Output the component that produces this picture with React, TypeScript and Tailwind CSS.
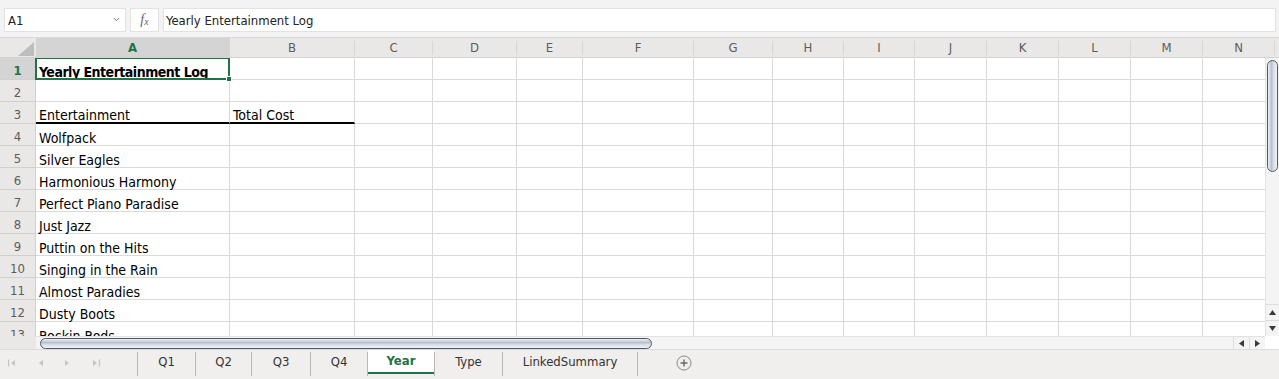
import { ChevronDown } from "lucide-react";

const COLS = ["A", "B", "C", "D", "E", "F", "G", "H", "I", "J", "K", "L", "M", "N"];
const GRID =
  "grid grid-cols-[36px_194px_125px_78px_84px_66px_111px_79px_71px_71px_72px_72px_72px_72px_72px]";

const ROWS: { a?: string; b?: string; bold?: boolean; head?: boolean }[] = [
  { a: "Yearly Entertainment Log", bold: true },
  {},
  { a: "Entertainment", b: "Total Cost", head: true },
  { a: "Wolfpack" },
  { a: "Silver Eagles" },
  { a: "Harmonious Harmony" },
  { a: "Perfect Piano Paradise" },
  { a: "Just Jazz" },
  { a: "Puttin on the Hits" },
  { a: "Singing in the Rain" },
  { a: "Almost Paradies" },
  { a: "Dusty Boots" },
  { a: "Rockin Rods" },
];

const TABS = [
  { name: "Q1", w: "w-[57px]" },
  { name: "Q2", w: "w-[55px]" },
  { name: "Q3", w: "w-[58px]" },
  { name: "Q4", w: "w-[56px]" },
  { name: "Year", w: "w-[66px]", active: true },
  { name: "Type", w: "w-[67px]" },
  { name: "LinkedSummary", w: "w-[134px]" },
];

function Tri({ dir, bar }: { dir: "l" | "r"; bar?: boolean }) {
  return (
    <svg width="10" height="10" viewBox="0 0 10 10" className="text-[#c4c4c4]">
      {dir === "l" ? (
        <>
          {bar && <rect x="1" y="1.5" width="1.2" height="7" fill="currentColor" />}
          <path d="M8 2 L4 5 L8 8 Z" fill="currentColor" />
        </>
      ) : (
        <>
          <path d="M2 2 L6 5 L2 8 Z" fill="currentColor" />
          {bar && <rect x="7.8" y="1.5" width="1.2" height="7" fill="currentColor" />}
        </>
      )}
    </svg>
  );
}

function Arrow({ d }: { d: "up" | "down" | "left" | "right" }) {
  const p = {
    up: "M1 7 L4.5 2 L8 7 Z",
    down: "M1 2 L4.5 7 L8 2 Z",
    left: "M7 1 L2 4.5 L7 8 Z",
    right: "M2 1 L7 4.5 L2 8 Z",
  }[d];
  return (
    <svg width="9" height="9" viewBox="0 0 9 9">
      <path d={p} fill="#3a3a3a" />
    </svg>
  );
}

export default function App() {
  return (
    <div className="w-[1279px] h-[379px] overflow-hidden bg-white font-['DejaVu_Sans_Condensed','DejaVu_Sans',sans-serif] text-black">
      {/* Formula bar */}
      <div className="h-[38px] bg-[#f3f3f3] border-b border-[#dadada] flex items-center gap-[4px] pl-[4px] pr-[3px] pt-[2px]">
        <div className="w-[122px] h-[24px] bg-white border border-[#e2e2e2] flex items-center justify-between pl-[3px] pr-[4px] pt-[2px] text-[13px] text-[#222]">
          <span>A1</span>
          <ChevronDown size={9} strokeWidth={2.5} className="text-[#666] -mt-[2px]" />
        </div>
        <div className="w-[29px] h-[24px] bg-white border border-[#e2e2e2] flex items-center justify-center font-['Liberation_Serif',serif] italic text-[#666]">
          <span className="text-[14px]">f</span>
          <span className="text-[10px] mt-[4px]">x</span>
        </div>
        <div className="flex-1 h-[24px] bg-white border border-[#e2e2e2] flex items-center pl-[2px] pt-[2px] text-[13px] text-[#222]">
          Yearly Entertainment Log
        </div>
      </div>

      {/* Column header */}
      <div className="h-[20px] bg-[#e9e8e7] border-b border-[#d2d2d2]">
        <div className={`${GRID} h-full`}>
          <div className="flex items-end justify-end pr-[2px] pb-[2px]">
            <svg width="16" height="14" viewBox="0 0 16 14">
              <path d="M16 0 L16 14 L0 14 Z" fill="#bdbdbd" />
            </svg>
          </div>
          {COLS.map((c) => (
            <div
              key={c}
              className={`flex items-center ${c === "A" ? "bg-[#d4d4d4]" : ""}`}
            >
              <span
                className={`flex-1 text-center text-[13px] ${
                  c === "A" ? "font-bold text-[#217346]" : "text-[#5c5c5c]"
                }`}
              >
                {c}
              </span>
              <span className="w-px h-[14px] bg-[#d6d6d6]" />
            </div>
          ))}
        </div>
      </div>

      {/* Body */}
      <div className="flex h-[278px]">
        <div className="w-[1265px] overflow-hidden">
          {ROWS.map((r, i) => (
            <div key={i} className={`${GRID} h-[22px]`}>
              <div
                className={`flex items-end justify-center pb-[1px] text-[13px] leading-[15px] border-r border-b border-[#d0d0d0] ${
                  i === 0 ? "bg-[#d4d4d4] text-[#217346] font-bold" : "bg-[#e9e8e7] text-[#5c5c5c]"
                }`}
              >
                {i + 1}
              </div>
              <div
                className={`relative flex items-end pl-[3px] pb-[1px] text-[14px] leading-[12px] whitespace-nowrap border-r ${
                  r.head ? "border-b-2 border-b-black border-r-[#dadada]" : "border-b border-[#dadada]"
                } ${r.bold ? "font-bold tracking-[-0.5px]" : ""}`}
              >
                {r.a}
                {i === 0 && (
                  <div className="absolute -left-px -top-px -right-px -bottom-px border-2 border-[#217346] z-10">
                    <div className="absolute -right-[4px] -bottom-[4px] w-[6px] h-[6px] bg-[#217346] border border-white" />
                  </div>
                )}
              </div>
              <div
                className={`flex items-end pl-[3px] pb-[1px] text-[14px] leading-[12px] whitespace-nowrap border-r ${
                  r.head ? "border-b-2 border-b-black border-r-[#dadada]" : "border-b border-[#dadada]"
                }`}
              >
                {r.b}
              </div>
              {COLS.slice(2).map((c) => (
                <div key={c} className="border-r border-b border-[#dadada]" />
              ))}
            </div>
          ))}
        </div>
        {/* Vertical scrollbar */}
        <div className="w-[14px] bg-[#f4f4f4] border-l border-[#e2e2e2] flex flex-col">
          <div className="flex-1 pt-[2px] px-[1px]">
            <div className="h-[112px] rounded-full border border-[#4f5966] bg-[linear-gradient(to_right,#eef1f4,#b7c1cd_40%,#d5dce4_60%,#f2f4f6)]" />
          </div>
          <div className="h-[16px] flex items-center justify-center border-t border-[#dcdcdc]">
            <Arrow d="up" />
          </div>
          <div className="h-[16px] flex items-center justify-center border-t border-[#dcdcdc]">
            <Arrow d="down" />
          </div>
        </div>
      </div>

      {/* Horizontal scrollbar */}
      <div className="relative z-20 h-[13px] flex">
        <div className="w-[36px] bg-[#e9e8e7]" />
        <div className="w-[1229px] bg-[#f4f4f4] border-t border-[#e2e2e2] flex items-center">
          <div className="flex-1 pl-[4px] pt-[1px] h-full">
            <div className="w-[612px] h-[11px] rounded-full border border-[#4f5966] bg-[linear-gradient(to_bottom,#eef1f4,#b7c1cd_40%,#d5dce4_60%,#f2f4f6)]" />
          </div>
          <div className="w-[16px] h-full flex items-center justify-center border-l border-[#dcdcdc]">
            <Arrow d="left" />
          </div>
          <div className="w-[16px] h-full flex items-center justify-center border-l border-[#dcdcdc]">
            <Arrow d="right" />
          </div>
        </div>
        <div className="flex-1 bg-white" />
      </div>

      {/* Sheet tabs */}
      <div className="h-[30px] bg-[#f0efee] border-t border-[#dcdcdc] flex items-start">
        <div className="w-[137px] h-[26px] flex items-center pl-[7px] gap-[18px]">
          <Tri dir="l" bar />
          <Tri dir="l" />
          <Tri dir="r" />
          <Tri dir="r" bar />
        </div>
        <div className="w-px h-[24px] mt-[2px] bg-[#b8b8b8]" />
        {TABS.map((t) => (
          <div key={t.name} className="flex items-start">
            <div
              className={`${t.w} h-[24px] flex items-center justify-center text-[13px] ${
                t.active
                  ? "bg-white border-b-2 border-[#217346] text-[#217346] font-bold"
                  : "text-[#333]"
              }`}
            >
              {t.name}
            </div>
            <div className="w-px h-[24px] mt-[2px] bg-[#b8b8b8]" />
          </div>
        ))}
        <div className="ml-[38px] h-[26px] flex items-center">
          <svg width="16" height="16" viewBox="0 0 16 16">
            <circle cx="8" cy="8" r="7" fill="none" stroke="#8a8a8a" strokeWidth="1" />
            <path d="M8 4.5 V11.5 M4.5 8 H11.5" stroke="#6a6a6a" strokeWidth="1.4" />
          </svg>
        </div>
      </div>
    </div>
  );
}
